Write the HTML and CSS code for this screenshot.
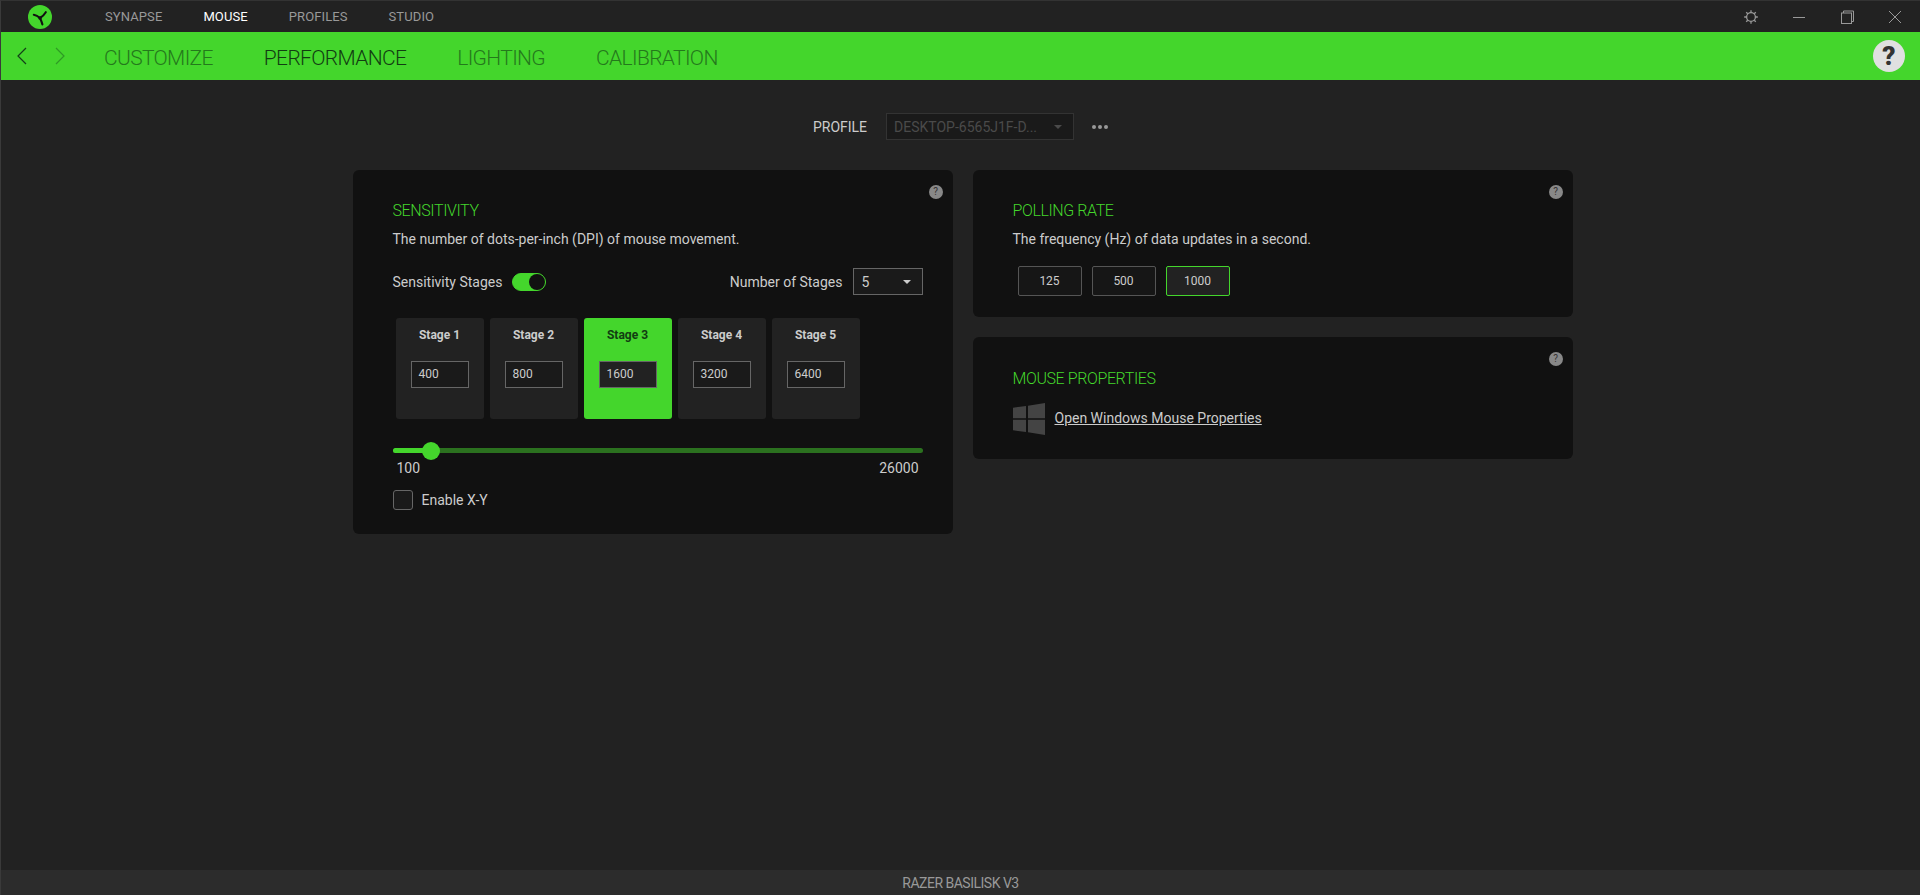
FILE: index.html
```html
<!DOCTYPE html>
<html>
<head>
    <meta charset="utf-8">
    <title>Razer Synapse</title>
    <link rel="stylesheet" href="styles.css">
</head>
<body>
    <div class="app">
        <div class="titlebar">
            <svg class="logo" viewBox="0 0 24 24">
                <circle cx="12" cy="12" r="12" fill="#44d62c"/>
                <path d="M12 13 Q9 10.4 5.8 9.8 M12 13 Q15.4 11 17.8 7.2 M12 13 Q13.4 16 14.4 19.4" stroke="#111" stroke-width="2.1" stroke-linecap="round" fill="none"/>
                <circle cx="12" cy="13" r="1.8" fill="#111"/>
            </svg>
            <nav class="main-nav">
                <a class="main-link">SYNAPSE</a>
                <a class="main-link active">MOUSE</a>
                <a class="main-link">PROFILES</a>
                <a class="main-link">STUDIO</a>
            </nav>
            <div class="win-controls">
                <svg class="win-icon" viewBox="0 0 16 16" fill="none" stroke="#999" stroke-width="1.3">
                    <circle cx="8" cy="8" r="4.4"/>
                    <path d="M8 1.2v2.4M8 12.4v2.4M1.2 8h2.4M12.4 8h2.4M3.2 3.2l1.6 1.6M11.2 11.2l1.6 1.6M3.2 12.8l1.6-1.6M11.2 4.8l1.6-1.6"/>
                </svg>
                <svg class="win-icon" viewBox="0 0 16 16" fill="none" stroke="#999" stroke-width="1">
                    <path d="M2 8.5h12"/>
                </svg>
                <svg class="win-icon" viewBox="0 0 16 16" fill="none" stroke="#999" stroke-width="1">
                    <rect x="2.5" y="4" width="10" height="10.5"/>
                    <path d="M4.5 4V2h10v10.5h-2"/>
                </svg>
                <svg class="win-icon" viewBox="0 0 16 16" fill="none" stroke="#999" stroke-width="1">
                    <path d="M2 2l12 12M14 2L2 14"/>
                </svg>
            </div>
        </div>

        <div class="subbar">
            <div class="arrows">
                <svg class="arrow" viewBox="0 0 12 20" fill="none" stroke="#14401a" stroke-width="1.2"><path d="M10 2L2 10l8 8"/></svg>
                <svg class="arrow" viewBox="0 0 12 20" fill="none" stroke="#2f9a26" stroke-width="1.2"><path d="M2 2l8 8-8 8"/></svg>
            </div>
            <nav class="tabs">
                <a class="tab">CUSTOMIZE</a>
                <a class="tab current">PERFORMANCE</a>
                <a class="tab">LIGHTING</a>
                <a class="tab">CALIBRATION</a>
            </nav>
            <div class="big-help">?</div>
        </div>

        <main class="content">
            <div class="profile-row">
                <span class="profile-label">PROFILE</span>
                <div class="profile-select">
                    <span>DESKTOP-6565J1F-D...</span>
                    <i class="caret dim"></i>
                </div>
                <div class="dots"><i></i><i></i><i></i></div>
            </div>

            <div class="panels">
                <section class="card sensitivity">
                    <span class="help">?</span>
                    <h2 class="card-title">SENSITIVITY</h2>
                    <p class="card-desc">The number of dots-per-inch (DPI) of mouse movement.</p>
                    <div class="stage-controls">
                        <div class="stage-toggle">
                            <span>Sensitivity Stages</span>
                            <div class="toggle"><i></i></div>
                        </div>
                        <div class="stage-count">
                            <span>Number of Stages</span>
                            <div class="count-select"><span>5</span><i class="caret"></i></div>
                        </div>
                    </div>
                    <div class="stages">
                        <div class="stage"><div class="stage-name">Stage 1</div><div class="stage-input">400</div></div>
                        <div class="stage"><div class="stage-name">Stage 2</div><div class="stage-input">800</div></div>
                        <div class="stage on"><div class="stage-name">Stage 3</div><div class="stage-input">1600</div></div>
                        <div class="stage"><div class="stage-name">Stage 4</div><div class="stage-input">3200</div></div>
                        <div class="stage"><div class="stage-name">Stage 5</div><div class="stage-input">6400</div></div>
                    </div>
                    <div class="slider">
                        <div class="slider-fill"></div>
                        <div class="slider-thumb"></div>
                    </div>
                    <div class="slider-labels"><span>100</span><span>26000</span></div>
                    <label class="check-row">
                        <span class="checkbox"></span>
                        <span>Enable X-Y</span>
                    </label>
                </section>

                <div class="right-col">
                    <section class="card polling">
                        <span class="help">?</span>
                        <h2 class="card-title">POLLING RATE</h2>
                        <p class="card-desc">The frequency (Hz) of data updates in a second.</p>
                        <div class="rates">
                            <div class="rate">125</div>
                            <div class="rate">500</div>
                            <div class="rate selected">1000</div>
                        </div>
                    </section>
                    <section class="card properties">
                        <span class="help">?</span>
                        <h2 class="card-title">MOUSE PROPERTIES</h2>
                        <div class="win-link">
                            <svg class="win-logo" viewBox="0 0 32 38" preserveAspectRatio="none" fill="#444">
                                <path d="M0 5.5L13 3.5V18H0zM15 3.2L32 0V18H15zM0 20H13V34.5L0 32.5zM15 20H32V38L15 34.8z"/>
                            </svg>
                            <a class="link">Open Windows Mouse Properties</a>
                        </div>
                    </section>
                </div>
            </div>
        </main>

        <footer class="footer">RAZER BASILISK V3</footer>
    </div>
</body>
</html>
```

FILE: styles.css
```css
* {
    margin: 0;
    padding: 0;
    box-sizing: border-box;
}

html, body {
    width: 100%;
    height: 100%;
    overflow: hidden;
}

body {
    background: #222;
    color: #ccc;
    font-family: Roboto, "Liberation Sans", sans-serif;
    font-size: 14px;
}

.app {
    height: 100%;
    display: flex;
    flex-direction: column;
    border-left: 1px solid #3a3a3a;
    border-top: 1px solid #333;
}

/* top window bar */
.titlebar {
    height: 31px;
    display: flex;
    align-items: center;
    padding-left: 27px;
}

.logo {
    width: 24px;
    height: 24px;
}

.main-nav {
    display: flex;
    margin-left: 53px;
    gap: 41px;
}

.main-link {
    color: #999;
    font-size: 13px;
    letter-spacing: 0.1px;
}

.main-link.active {
    color: #fff;
}

.win-controls {
    margin-left: auto;
    display: flex;
    gap: 32px;
    padding-right: 17px;
}

.win-icon {
    width: 16px;
    height: 16px;
    display: block;
}

/* green bar */
.subbar {
    height: 48px;
    background: #44d62c;
    display: flex;
    align-items: center;
    padding: 0 15px 0 15px;
}

.arrows {
    display: flex;
    gap: 26px;
}

.arrow {
    width: 12px;
    height: 20px;
    display: block;
}

.tabs {
    display: flex;
    gap: 51px;
    margin-left: 38px;
    padding-top: 3px;
}

.tab {
    font-size: 21px;
    font-weight: 300;
    color: #24791c;
    letter-spacing: -0.65px;
}

.tab.current {
    color: #123d12;
}

.big-help {
    margin-left: auto;
    width: 32px;
    height: 32px;
    border-radius: 50%;
    background: #e0e0e0;
    color: #333;
    font-size: 26px;
    font-weight: 900;
    line-height: 32px;
    text-align: center;
}

/* page content */
.content {
    flex: 1;
    display: flex;
    flex-direction: column;
    align-items: center;
}

.profile-row {
    display: flex;
    align-items: center;
    height: 27px;
    margin-top: 33px;
    margin-bottom: 30px;
}

.profile-label {
    color: #ccc;
    margin-right: 19px;
}

.profile-select {
    width: 188px;
    height: 27px;
    background: #1a1a1a;
    border: 1px solid #333;
    color: #4a4a4a;
    display: flex;
    align-items: center;
    justify-content: space-between;
    padding: 0 11px 0 7px;
}

.caret {
    width: 0;
    height: 0;
    border-left: 4px solid transparent;
    border-right: 4px solid transparent;
    border-top: 4px solid #ccc;
}

.caret.dim {
    border-top-color: #4a4a4a;
}

.dots {
    display: flex;
    gap: 2px;
    margin-left: 18px;
}

.dots i {
    width: 4px;
    height: 4px;
    border-radius: 50%;
    background: #999;
}

.panels {
    display: flex;
    gap: 20px;
    align-items: flex-start;
    padding-left: 4px;
}

.right-col {
    display: flex;
    flex-direction: column;
    gap: 20px;
}

.card {
    position: relative;
    width: 600px;
    background: #111;
    border-radius: 6px;
    padding: 32px 30px 0 39px;
}

.help {
    position: absolute;
    top: 15px;
    right: 10px;
    width: 14px;
    height: 14px;
    border-radius: 50%;
    background: #888;
    color: #333;
    font-size: 10px;
    line-height: 14px;
    text-align: center;
}

.card-title {
    font-size: 16px;
    font-weight: 300;
    color: #44d62c;
    line-height: 18px;
    letter-spacing: -0.4px;
}

.card-desc {
    margin-top: 10px;
    line-height: 18px;
    color: #ccc;
}

.sensitivity {
    height: 364px;
    padding-left: 40px;
}

.stage-controls {
    display: flex;
    justify-content: space-between;
    align-items: center;
    margin-top: 20px;
    height: 27px;
}

.stage-toggle, .stage-count {
    display: flex;
    align-items: center;
}

.toggle {
    width: 34px;
    height: 18px;
    margin-left: 10px;
    border-radius: 9px;
    background: #44d62c;
    display: flex;
    justify-content: flex-end;
    border: 1px solid #44d62c;
}

.toggle i {
    width: 16px;
    height: 16px;
    border-radius: 50%;
    background: #111;
}

.count-select {
    width: 70px;
    height: 27px;
    margin-left: 10px;
    border: 1px solid #666;
    background: #1a1a1a;
    display: flex;
    align-items: center;
    justify-content: space-between;
    padding: 0 11px 0 8px;
}

.stages {
    display: flex;
    gap: 6px;
    margin: 23px 0 0 3px;
}

.stage {
    width: 88px;
    height: 101px;
    background: #222;
    border-radius: 3px;
    text-align: center;
    padding-top: 9px;
}

.stage-name {
    font-size: 12px;
    font-weight: 700;
    line-height: 16px;
    color: #ccc;
}

.stage-input {
    width: 58px;
    height: 27px;
    margin: 18px 0 0 15px;
    border: 1px solid #666;
    background: #1a1a1a;
    font-size: 12px;
    line-height: 25px;
    text-align: left;
    padding-left: 7px;
}

.stage.on {
    background: #44d62c;
}

.stage.on .stage-name {
    color: #123d12;
}

.stage.on .stage-input {
    background: #222;
    color: #ccc;
}

.slider {
    position: relative;
    height: 5px;
    margin-top: 29px;
    border-radius: 3px;
    background: #2b711f;
}

.slider-fill {
    width: 38px;
    height: 100%;
    border-radius: 3px 0 0 3px;
    background: #44d62c;
}

.slider-thumb {
    position: absolute;
    left: 29px;
    top: -6px;
    width: 18px;
    height: 18px;
    border-radius: 50%;
    background: #44d62c;
}

.slider-labels {
    display: flex;
    justify-content: space-between;
    padding: 0 4px 0 4px;
    margin-top: 6px;
    line-height: 18px;
}

.check-row {
    display: flex;
    align-items: center;
    gap: 9px;
    margin-top: 13px;
}

.checkbox {
    width: 20px;
    height: 20px;
    border: 1px solid #666;
    border-radius: 3px;
    background: #1a1a1a;
}

.polling {
    height: 147px;
    padding-left: 40px;
}

.rates {
    display: flex;
    gap: 10px;
    margin: 18px 0 0 5px;
}

.rate {
    width: 64px;
    height: 30px;
    border: 1px solid #555;
    border-radius: 2px;
    background: #161616;
    font-size: 12px;
    line-height: 28px;
    text-align: center;
}

.rate.selected {
    border-color: #44d62c;
    background: #222;
}

.properties {
    height: 122px;
    padding-top: 33px;
    padding-left: 40px;
}

.win-link {
    display: flex;
    align-items: center;
    gap: 10px;
    margin-top: 15px;
}

.win-logo {
    width: 32px;
    height: 32px;
}

.link {
    color: #ccc;
    text-decoration: underline;
    padding-bottom: 2px;
}

.footer {
    height: 25px;
    background: #2c2c2c;
    color: #999;
    font-size: 14px;
    letter-spacing: -0.5px;
    line-height: 27px;
    text-align: center;
}
```
